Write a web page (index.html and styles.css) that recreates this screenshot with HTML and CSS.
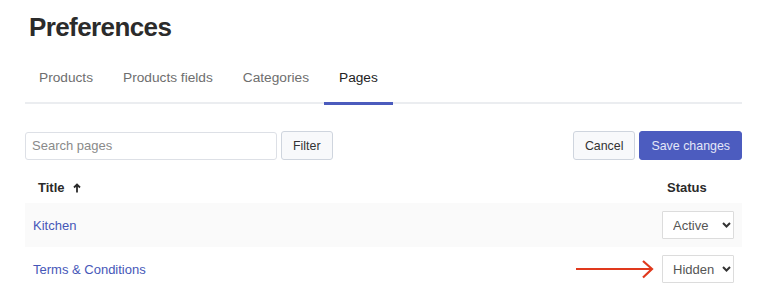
FILE: index.html
```html
<!DOCTYPE html>
<html lang="en">
<head>
    <meta charset="UTF-8">
    <meta name="viewport" content="width=device-width, initial-scale=1.0">
    <title>Preferences - Pages</title>
    <link rel="stylesheet" href="styles.css">
</head>
<body>
    <div class="page">
        <h1>Preferences</h1>

        <!-- Tabs -->
        <div class="tabs">
            <a class="tab" href="#">Products</a>
            <a class="tab" href="#">Products fields</a>
            <a class="tab" href="#">Categories</a>
            <a class="tab active" href="#">Pages</a>
        </div>

        <!-- Toolbar -->
        <div class="toolbar">
            <div class="search">
                <input class="search-input" type="text" placeholder="Search pages">
                <button class="btn">Filter</button>
            </div>
            <div class="actions">
                <button class="btn">Cancel</button>
                <button class="btn btn-primary">Save changes</button>
            </div>
        </div>

        <!-- Pages table -->
        <table class="pages-table">
            <thead>
                <tr>
                    <th class="col-title">Title
                        <svg class="sort-icon" width="8" height="10" viewBox="0 0 8 10">
                            <path d="M4 9.5V1.5M1 4.5L4 1.5L7 4.5" fill="none" stroke="#2a2a2a" stroke-width="1.8"/>
                        </svg>
                    </th>
                    <th class="col-status">Status</th>
                </tr>
            </thead>
            <tbody>
                <tr>
                    <td><a href="#">Kitchen</a></td>
                    <td class="col-status">
                        <span class="select">
                            <select><option>Active</option><option>Hidden</option></select>
                            <svg class="chevron" width="9" height="6" viewBox="0 0 9 6">
                                <path d="M1 1L4.5 4.5L8 1" fill="none" stroke="#333" stroke-width="2"/>
                            </svg>
                        </span>
                    </td>
                </tr>
                <tr>
                    <td><a href="#">Terms &amp; Conditions</a></td>
                    <td class="col-status">
                        <!-- annotation arrow -->
                        <svg class="pointer" width="78" height="20" viewBox="0 0 78 20">
                            <path d="M0 10H76M67 2L76 10L67 18.5" fill="none" stroke="#e0391d" stroke-width="2.2"/>
                        </svg>
                        <span class="select">
                            <select><option>Hidden</option><option>Active</option></select>
                            <svg class="chevron" width="9" height="6" viewBox="0 0 9 6">
                                <path d="M1 1L4.5 4.5L8 1" fill="none" stroke="#333" stroke-width="2"/>
                            </svg>
                        </span>
                    </td>
                </tr>
            </tbody>
        </table>
    </div>
</body>
</html>
```

FILE: styles.css
```css
body {
    margin: 0;
    font-family: 'Liberation Sans', Arial, sans-serif;
    background-color: #fff;
    color: #2a2a2a;
}
.page {
    padding: 11px 26px 0 25px;
}
h1 {
    margin: 0 0 11px 4px;
    font-size: 26px;
    line-height: 32px;
    letter-spacing: -0.6px;
    font-weight: bold;
    color: #2b2b2b;
}
.tabs {
    display: flex;
    border-bottom: 2px solid #ebedf0;
}
.tab {
    padding: 14px 15px;
    margin-bottom: -3px;
    font-size: 13.7px;
    line-height: 20px;
    color: #6e6e6e;
    text-decoration: none;
    border-bottom: 3px solid transparent;
}
.tab:first-child {
    padding-left: 14px;
}
.tab.active {
    color: #222;
    border-bottom-color: #4b5bbd;
}
.toolbar {
    display: flex;
    justify-content: space-between;
    align-items: center;
    margin-top: 27px;
}
.search,
.actions {
    display: flex;
    align-items: center;
    gap: 4px;
}
.search-input {
    box-sizing: border-box;
    width: 252px;
    height: 28px;
    padding: 0 6px;
    border: 1px solid #dde0e6;
    border-radius: 3px;
    font-family: inherit;
    font-size: 13px;
    color: #333;
}
.search-input::placeholder {
    color: #8a8a8a;
}
.btn {
    box-sizing: border-box;
    height: 29px;
    padding: 0 11px;
    border: 1px solid #cfd5de;
    border-radius: 3px;
    background-color: #f8f9fb;
    font-family: inherit;
    font-size: 12.4px;
    color: #333;
    cursor: pointer;
}
.btn-primary {
    padding: 0 11px;
    background-color: #4c5cbf;
    border-color: #4c5cbf;
    color: #e4e7f8;
}
.pages-table {
    width: 100%;
    margin-top: 11px;
    border-collapse: collapse;
    font-size: 13px;
}
.pages-table th {
    height: 32px;
    padding: 0 8px 0 13px;
    text-align: left;
    font-weight: bold;
    color: #2a2a2a;
}
.sort-icon {
    margin-left: 5px;
    vertical-align: -1px;
}
.pages-table td {
    height: 44px;
    padding: 0 8px;
}
.pages-table tbody tr:nth-child(odd) {
    background-color: #fafafa;
}
.pages-table td a {
    color: #4657b8;
    text-decoration: none;
}
.pages-table th.col-status {
    width: 67px;
}
.pages-table td.col-status {
    width: 72px;
    position: relative;
}
.select {
    position: relative;
    display: block;
    width: 72px;
}
.select select {
    appearance: none;
    box-sizing: border-box;
    width: 72px;
    height: 28px;
    padding: 0 0 0 10px;
    border: 1px solid #dcdcdc;
    border-radius: 1px;
    background-color: #fff;
    font-family: inherit;
    font-size: 13px;
    color: #555;
}
.chevron {
    position: absolute;
    right: 3px;
    top: 11px;
    pointer-events: none;
}
.pointer {
    position: absolute;
    right: 100%;
    top: 12px;
}
```
